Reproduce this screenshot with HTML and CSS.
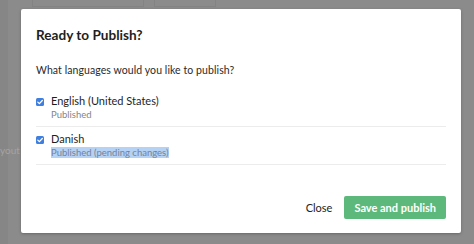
FILE: index.html
```html
<!DOCTYPE html>
<html>
<head>
<meta charset="utf-8">
<link rel="stylesheet" href="styles.css">
</head>
<body>
<div class="page">
  <div class="page-bar">
    <div class="page-tab"></div>
    <div class="page-tab short"></div>
  </div>
  <div class="page-side">yout</div>
</div>
<div class="modal">
  <h1 class="title">Ready to Publish?</h1>
  <p class="question">What languages would you like to publish?</p>
  <ul class="langs">
    <li class="lang">
      <span class="check"><svg viewBox="0 0 8 8" width="8" height="8"><path d="M1.8 4.1 L3.4 5.6 L6.3 2.5" fill="none" stroke="#fff" stroke-width="1.3" stroke-linecap="round" stroke-linejoin="round"/></svg></span>
      <div class="lang-text">
        <div class="lang-name">English (United States)</div>
        <div class="lang-status">Published</div>
      </div>
    </li>
    <li class="lang">
      <span class="check"><svg viewBox="0 0 8 8" width="8" height="8"><path d="M1.8 4.1 L3.4 5.6 L6.3 2.5" fill="none" stroke="#fff" stroke-width="1.3" stroke-linecap="round" stroke-linejoin="round"/></svg></span>
      <div class="lang-text">
        <div class="lang-name">Danish</div>
        <div class="lang-status"><span class="selected">Published (pending changes)</span></div>
      </div>
    </li>
  </ul>
  <div class="actions">
    <button class="btn-close">Close</button>
    <button class="btn-primary">Save and publish</button>
  </div>
</div>
</body>
</html>
```
FILE: styles.css
```css
html, body {
  margin: 0;
  padding: 0;
}
body {
  width: 474px;
  height: 244px;
  background: #8b8b8b;
  font-family: Lato, "Open Sans", sans-serif;
  overflow: hidden;
  position: relative;
}
.page {
  height: 244px;
  border-left: 8px solid #868686;
  box-sizing: border-box;
}
.page-bar {
  display: flex;
  gap: 10px;
  padding: 0 0 0 24px;
}
.page-tab {
  width: 110px;
  height: 6px;
  border: 1px solid #838383;
  border-top: none;
}
.page-tab.short {
  width: 60px;
}
.page-side {
  margin-top: 136px;
  margin-left: -8px;
  font-size: 10px;
  line-height: 14px;
  color: #a4a4a4;
}
.modal {
  position: absolute;
  left: 21px;
  top: 9px;
  width: 440px;
  height: 224px;
  box-sizing: border-box;
  background: #fff;
  border-radius: 2px;
  box-shadow: 0 1px 3px rgba(0,0,0,0.25);
  padding: 18px 15px 0 15px;
  display: flex;
  flex-direction: column;
}
.title {
  margin: 0;
  font-size: 13.6px;
  font-weight: 700;
  color: #1e1e1e;
  line-height: 16px;
}
.question {
  margin: 20px 0 0;
  font-size: 10.5px;
  letter-spacing: 0.08px;
  color: #2a2a2a;
  line-height: 14px;
}
.langs {
  list-style: none;
  margin: 12px 0 0;
  padding: 0;
}
.lang {
  display: flex;
  align-items: flex-start;
  gap: 7px;
  padding: 5px 0 4px;
  border-bottom: 1px solid #ececec;
}
.check {
  margin-top: 3.5px;
  width: 8px;
  height: 8px;
  border-radius: 1.5px;
  background: #3f7fe0;
  display: flex;
  align-items: center;
  justify-content: center;
  flex: none;
}
.check svg {
  width: 8px;
  height: 8px;
}
.lang-name {
  font-size: 11px;
  color: #1e1e1e;
  line-height: 14px;
}
.lang-status {
  font-size: 9.5px;
  color: #858585;
  line-height: 14px;
}
.selected {
  background: #b5d2f5;
  color: #74839a;
}
.actions {
  margin-top: auto;
  margin-bottom: 14px;
  display: flex;
  justify-content: flex-end;
  align-items: center;
  gap: 12px;
}
.btn-close {
  border: none;
  background: none;
  font-family: inherit;
  font-size: 11px;
  color: #222;
  padding: 0;
  cursor: pointer;
}
.btn-primary {
  border: none;
  background: #5cb97b;
  color: #fff;
  font-family: inherit;
  font-size: 11px;
  font-weight: 700;
  border-radius: 2px;
  height: 23px;
  padding: 0 10px;
  cursor: pointer;
}
```
